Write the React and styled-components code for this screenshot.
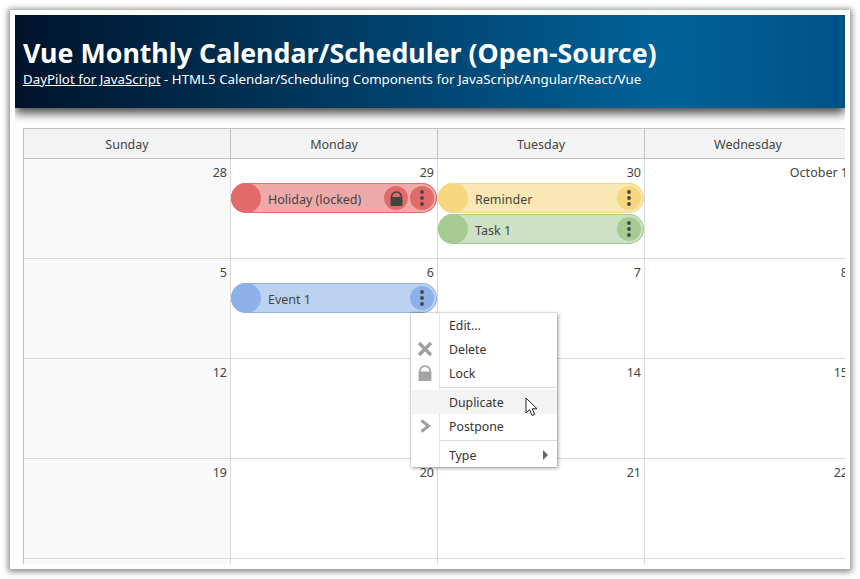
import React from "react"
import styled, { createGlobalStyle } from "styled-components"

const GlobalStyle = createGlobalStyle`
  html, body {
    margin: 0;
    padding: 0;
    background: #fff;
  }
  body {
    font-family: "Noto Sans", "Open Sans", sans-serif;
    color: #333;
  }
  * {
    box-sizing: border-box;
  }
`

const Page = styled.div`
  width: 860px;
  height: 579px;
  padding: 10px 10px 10px 10px;
  overflow: hidden;
`

const Frame = styled.div`
  width: 840px;
  height: 559px;
  padding: 5px;
  background: #fff;
  box-shadow: 0 1px 6px 2px rgba(0, 0, 0, 0.45);
`

const Content = styled.div`
  position: relative;
  width: 830px;
  height: 549px;
  overflow: hidden;
`

const Header = styled.header`
  height: 93px;
  padding: 21px 8px 0;
  color: #fff;
  background: linear-gradient(to right, #00132b 0%, #006299 78%, #005287 100%);
  box-shadow: 0 5px 10px rgba(0, 0, 0, 0.75);
`

const Title = styled.h1`
  margin: 0;
  font-size: 26.75px;
  line-height: 34px;
  font-weight: 700;
  white-space: nowrap;
`

const Subtitle = styled.div`
  font-size: 13.3px;
  line-height: 18px;
  white-space: nowrap;

  a {
    color: #fff;
    text-decoration: underline;
  }
`

const Calendar = styled.div`
  width: 1000px;
  margin: 20px 0 0 8px;
  border-top: 1px solid #c0c0c0;
  border-left: 1px solid #c0c0c0;
`

const HeaderRow = styled.div`
  display: grid;
  grid-template-columns: repeat(4, 207px);
`

const DayName = styled.div`
  height: 30px;
  padding-top: 1px;
  display: flex;
  align-items: center;
  justify-content: center;
  font-size: 12.5px;
  color: #444;
  background: #f3f3f3;
  border-right: 1px solid #c0c0c0;
  border-bottom: 1px solid #c0c0c0;
`

const Week = styled.div`
  display: grid;
  grid-template-columns: repeat(4, 207px);
`

const Cell = styled.div`
  height: 100px;
  background: ${props => (props.$weekend ? "#f9f9f9" : "#fff")};
  border-right: 1px solid #d9d9d9;
  border-bottom: 1px solid #d9d9d9;
`

const DateLabel = styled.div`
  height: 24px;
  padding: 5px 3px 0 0;
  font-size: 12.5px;
  line-height: 18px;
  text-align: right;
  color: #444;
`

const EventList = styled.div`
  display: flex;
  flex-direction: column;
  gap: 1px;
`

const EventBar = styled.div`
  display: flex;
  align-items: center;
  gap: 2px;
  height: 30px;
  padding-right: 3px;
  border-radius: 15px;
  background: ${props => props.$bar};
  box-shadow: inset 0 0 0 1px ${props => props.$dot};
`

const EventDot = styled.span`
  flex: none;
  width: 30px;
  height: 30px;
  border-radius: 50%;
  background: ${props => props.$dot};
`

const EventText = styled.span`
  flex: 1;
  padding: 2px 0 0 5px;
  font-size: 12.5px;
  color: #444;
`

const EventButton = styled.span`
  flex: none;
  display: flex;
  align-items: center;
  justify-content: center;
  width: 24px;
  height: 24px;
  border-radius: 50%;
  background: ${props => props.$dot};
`

const Menu = styled.div`
  position: absolute;
  left: 396px;
  top: 298px;
  width: 146px;
  background: #fff;
  box-shadow: 0 0 1px rgba(0, 0, 0, 0.35), 1px 1px 4px rgba(0, 0, 0, 0.4);
  font-size: 12.3px;
  color: #333;
`

const MenuItem = styled.div`
  display: flex;
  align-items: center;
  height: 24px;
  background: ${props => (props.$active ? "#f3f3f3" : "transparent")};
`

const MenuIcon = styled.span`
  flex: none;
  display: flex;
  align-items: center;
  justify-content: center;
  width: 29px;
  height: 100%;
  border-right: 1px solid ${props => (props.$active ? "transparent" : "#e6e6e6")};
`

const MenuLabel = styled.span`
  flex: 1;
  padding-left: 9px;
`

const SubArrow = styled.span`
  width: 0;
  height: 0;
  margin-right: 9px;
  border-top: 5px solid transparent;
  border-bottom: 5px solid transparent;
  border-left: 5px solid #666;
`

const MenuSeparator = styled.div`
  display: flex;
  align-items: center;
  height: 5px;
  padding-left: 29px;
  background: linear-gradient(to right, transparent 28px, #e6e6e6 28px, #e6e6e6 29px, transparent 29px);

  &::after {
    content: "";
    flex: 1;
    height: 1px;
    background: #d8d8d8;
  }
`

const Cursor = styled.svg`
  position: absolute;
  left: 510px;
  top: 382px;
`

const Dots = () => (
  <svg width="4" height="16" viewBox="0 0 4 16">
    <circle cx="2" cy="2" r="1.9" fill="#444" />
    <circle cx="2" cy="8" r="1.9" fill="#444" />
    <circle cx="2" cy="14" r="1.9" fill="#444" />
  </svg>
)

const LockIcon = ({ color = "#444", width = 13, height = 15 }) => (
  <svg width={width} height={height} viewBox="0 0 13 15">
    <path d="M1.5 6.5V6a5 5 0 0 1 10 0v.5" fill="none" stroke={color} strokeWidth="1.6" />
    <rect x="0.5" y="6" width="12" height="9" rx="0.8" fill={color} />
  </svg>
)

const CrossIcon = () => (
  <svg width="16" height="16" viewBox="0 0 16 16">
    <path d="M2 2l12 12M14 2L2 14" stroke="#a0a0a0" strokeWidth="3.4" fill="none" />
  </svg>
)

const ChevronIcon = () => (
  <svg width="11" height="14" viewBox="0 0 11 14">
    <path d="M1.5 1.5L8.5 7l-7 5.5" stroke="#a0a0a0" strokeWidth="3.2" fill="none" />
  </svg>
)

const colors = {
  red: { bar: "#eea9a9", dot: "#e26a6a" },
  yellow: { bar: "#f9e8b3", dot: "#f6d77f" },
  green: { bar: "#cde1c4", dot: "#a6cb92" },
  blue: { bar: "#bdd2f1", dot: "#8cb0e8" },
}

const days = ["Sunday", "Monday", "Tuesday", "Wednesday"]

const weeks = [
  [
    { date: "28" },
    { date: "29", events: [{ text: "Holiday (locked)", color: "red", locked: true }] },
    {
      date: "30",
      events: [
        { text: "Reminder", color: "yellow" },
        { text: "Task 1", color: "green" },
      ],
    },
    { date: "October 1" },
  ],
  [
    { date: "5" },
    { date: "6", events: [{ text: "Event 1", color: "blue" }] },
    { date: "7" },
    { date: "8" },
  ],
  [{ date: "12" }, { date: "13" }, { date: "14" }, { date: "15" }],
  [{ date: "19" }, { date: "20" }, { date: "21" }, { date: "22" }],
  [{ date: "26" }, { date: "27" }, { date: "28" }, { date: "29" }],
]

const CalendarEvent = ({ text, color, locked }) => {
  const { bar, dot } = colors[color]
  return (
    <EventBar $bar={bar} $dot={dot}>
      <EventDot $dot={dot} />
      <EventText>{text}</EventText>
      {locked && (
        <EventButton $dot={dot}>
          <LockIcon />
        </EventButton>
      )}
      <EventButton $dot={dot}>
        <Dots />
      </EventButton>
    </EventBar>
  )
}

const App = () => (
  <Page>
    <GlobalStyle />
    <Frame>
      <Content>
        <Header>
          <Title>Vue Monthly Calendar/Scheduler (Open-Source)</Title>
          <Subtitle>
            <a href="#daypilot">DayPilot for JavaScript</a> - HTML5 Calendar/Scheduling Components for
            JavaScript/Angular/React/Vue
          </Subtitle>
        </Header>

        <Calendar>
          <HeaderRow>
            {days.map(day => (
              <DayName key={day}>{day}</DayName>
            ))}
          </HeaderRow>
          {weeks.map((week, i) => (
            <Week key={i}>
              {week.map((cell, j) => (
                <Cell key={j} $weekend={j === 0}>
                  <DateLabel>{cell.date}</DateLabel>
                  {cell.events && (
                    <EventList>
                      {cell.events.map(event => (
                        <CalendarEvent key={event.text} {...event} />
                      ))}
                    </EventList>
                  )}
                </Cell>
              ))}
            </Week>
          ))}
        </Calendar>

        <Menu>
          <MenuItem>
            <MenuIcon />
            <MenuLabel>Edit...</MenuLabel>
          </MenuItem>
          <MenuItem>
            <MenuIcon>
              <CrossIcon />
            </MenuIcon>
            <MenuLabel>Delete</MenuLabel>
          </MenuItem>
          <MenuItem>
            <MenuIcon>
              <LockIcon color="#a4a4a4" width={14} height={16} />
            </MenuIcon>
            <MenuLabel>Lock</MenuLabel>
          </MenuItem>
          <MenuSeparator />
          <MenuItem $active>
            <MenuIcon $active />
            <MenuLabel>Duplicate</MenuLabel>
          </MenuItem>
          <MenuItem>
            <MenuIcon>
              <ChevronIcon />
            </MenuIcon>
            <MenuLabel>Postpone</MenuLabel>
          </MenuItem>
          <MenuSeparator />
          <MenuItem>
            <MenuIcon />
            <MenuLabel>Type</MenuLabel>
            <SubArrow />
          </MenuItem>
        </Menu>

        <Cursor width="14" height="20" viewBox="0 0 14 20">
          <path
            d="M1 1v15l3.6-3.3 2.5 5.8 2.6-1.1-2.5-5.6H12z"
            fill="#fff"
            stroke="#222"
            strokeWidth="1"
            strokeLinejoin="round"
          />
        </Cursor>
      </Content>
    </Frame>
  </Page>
)

export default App
